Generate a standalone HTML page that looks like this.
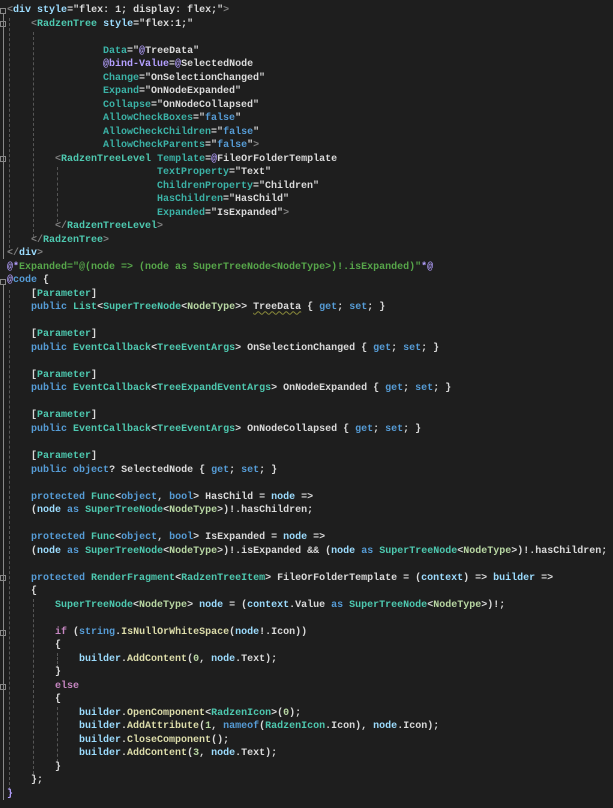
<!DOCTYPE html>
<html><head><meta charset="utf-8"><style>
body{margin:0;background:#1e1e1e;width:613px;height:808px;overflow:hidden;position:relative}
pre{margin:0;position:absolute;left:7px;top:4px;font-family:"Liberation Mono",monospace;font-size:10px;line-height:13.52px;color:#dadada;font-weight:bold;letter-spacing:0}
.k{color:#569cd6}.t{color:#4ec9b0}.n{color:#b8d7a3}.v{color:#9cdcfe}.m{color:#dcdcaa}.g{color:#808080}
.a{color:#3bb2a6}.p{color:#c586c0;}.at{color:#b4a0ff}.c{color:#57a64a}.h{color:#9cdcfe}.s{color:#dadada}
.u{text-decoration:underline wavy #8a8a3a}
.f{position:absolute;left:0;width:6px;height:6px;border:1px solid #888;box-sizing:border-box}
.l{position:absolute;border-left:1px solid #888}
.d{position:absolute;border-left:1px dashed #555}
</style></head><body>
<div class="f" style="top:8px"></div><div class="f" style="top:21px"></div><div class="f" style="top:156px"></div><div class="f" style="top:279px"></div><div class="f" style="top:575px"></div><div class="f" style="top:630px"></div><div class="f" style="top:684px"></div>
<div class="l" style="left:3px;top:14px;height:245px"></div>
<div class="l" style="left:3px;top:285px;height:515px"></div>
<div class="d" style="left:9px;top:18px;height:235px"></div>
<div class="d" style="left:33px;top:32px;height:205px"></div>
<div class="d" style="left:57px;top:167px;height:55px"></div>
<div class="d" style="left:9px;top:290px;height:500px"></div>
<div class="d" style="left:33px;top:599px;height:175px"></div>
<div class="d" style="left:57px;top:653px;height:15px"></div>
<div class="d" style="left:57px;top:707px;height:55px"></div>
<pre><span class="g">&lt;</span><span class="h">div</span> <span class="h">style</span>=<span class="s">"flex: 1; display: flex;"</span><span class="g">&gt;</span>
    <span class="g">&lt;</span><span class="t">RadzenTree</span> <span class="h">style</span>=<span class="s">"flex:1;"</span>

                <span class="a">Data</span>="<span class="at">@</span>TreeData"
                <span class="at">@bind-Value</span>=<span class="at">@</span>SelectedNode
                <span class="a">Change</span>="OnSelectionChanged"
                <span class="a">Expand</span>="OnNodeExpanded"
                <span class="a">Collapse</span>="OnNodeCollapsed"
                <span class="a">AllowCheckBoxes</span>="<span class="k">false</span>"
                <span class="a">AllowCheckChildren</span>="<span class="k">false</span>"
                <span class="a">AllowCheckParents</span>="<span class="k">false</span>"<span class="g">&gt;</span>
        <span class="g">&lt;</span><span class="t">RadzenTreeLevel</span> <span class="a">Template</span>=<span class="at">@</span>FileOrFolderTemplate
                         <span class="a">TextProperty</span>="Text"
                         <span class="a">ChildrenProperty</span>="Children"
                         <span class="a">HasChildren</span>="HasChild"
                         <span class="a">Expanded</span>="IsExpanded"<span class="g">&gt;</span>
        <span class="g">&lt;/</span><span class="t">RadzenTreeLevel</span><span class="g">&gt;</span>
    <span class="g">&lt;/</span><span class="t">RadzenTree</span><span class="g">&gt;</span>
<span class="g">&lt;/</span><span class="h">div</span><span class="g">&gt;</span>
<span class="c"><span class="at">@*</span>Expanded="@(node =&gt; (node as SuperTreeNode&lt;NodeType&gt;)!.isExpanded)"<span class="at">*@</span></span>
<span class="at">@</span><span class="k">code</span> {
    [<span class="t">Parameter</span>]
    <span class="k">public</span> <span class="t">List</span>&lt;<span class="t">SuperTreeNode</span>&lt;<span class="n">NodeType</span>&gt;&gt; <span class="u">TreeData</span> { <span class="k">get</span>; <span class="k">set</span>; }

    [<span class="t">Parameter</span>]
    <span class="k">public</span> <span class="t">EventCallback</span>&lt;<span class="t">TreeEventArgs</span>&gt; OnSelectionChanged { <span class="k">get</span>; <span class="k">set</span>; }

    [<span class="t">Parameter</span>]
    <span class="k">public</span> <span class="t">EventCallback</span>&lt;<span class="t">TreeExpandEventArgs</span>&gt; OnNodeExpanded { <span class="k">get</span>; <span class="k">set</span>; }

    [<span class="t">Parameter</span>]
    <span class="k">public</span> <span class="t">EventCallback</span>&lt;<span class="t">TreeEventArgs</span>&gt; OnNodeCollapsed { <span class="k">get</span>; <span class="k">set</span>; }

    [<span class="t">Parameter</span>]
    <span class="k">public</span> <span class="k">object</span>? SelectedNode { <span class="k">get</span>; <span class="k">set</span>; }

    <span class="k">protected</span> <span class="t">Func</span>&lt;<span class="k">object</span>, <span class="k">bool</span>&gt; HasChild = <span class="v">node</span> =&gt;
    (<span class="v">node</span> <span class="k">as</span> <span class="t">SuperTreeNode</span>&lt;<span class="n">NodeType</span>&gt;)!.hasChildren;

    <span class="k">protected</span> <span class="t">Func</span>&lt;<span class="k">object</span>, <span class="k">bool</span>&gt; IsExpanded = <span class="v">node</span> =&gt;
    (<span class="v">node</span> <span class="k">as</span> <span class="t">SuperTreeNode</span>&lt;<span class="n">NodeType</span>&gt;)!.isExpanded &amp;&amp; (<span class="v">node</span> <span class="k">as</span> <span class="t">SuperTreeNode</span>&lt;<span class="n">NodeType</span>&gt;)!.hasChildren;

    <span class="k">protected</span> <span class="t">RenderFragment</span>&lt;<span class="t">RadzenTreeItem</span>&gt; FileOrFolderTemplate = (<span class="v">context</span>) =&gt; <span class="v">builder</span> =&gt;
    {
        <span class="t">SuperTreeNode</span>&lt;<span class="n">NodeType</span>&gt; <span class="v">node</span> = (<span class="v">context</span>.Value <span class="k">as</span> <span class="t">SuperTreeNode</span>&lt;<span class="n">NodeType</span>&gt;)!;

        <span class="p">if</span> (<span class="k">string</span>.<span class="m">IsNullOrWhiteSpace</span>(<span class="v">node</span>!.Icon))
        {
            <span class="v">builder</span>.<span class="m">AddContent</span>(<span class="n">0</span>, <span class="v">node</span>.Text);
        }
        <span class="p">else</span>
        {
            <span class="v">builder</span>.<span class="m">OpenComponent</span>&lt;<span class="t">RadzenIcon</span>&gt;(<span class="n">0</span>);
            <span class="v">builder</span>.<span class="m">AddAttribute</span>(<span class="n">1</span>, <span class="k">nameof</span>(<span class="t">RadzenIcon</span>.Icon), <span class="v">node</span>.Icon);
            <span class="v">builder</span>.<span class="m">CloseComponent</span>();
            <span class="v">builder</span>.<span class="m">AddContent</span>(<span class="n">3</span>, <span class="v">node</span>.Text);
        }
    };
<span class="at">}</span></pre>
</body></html>
